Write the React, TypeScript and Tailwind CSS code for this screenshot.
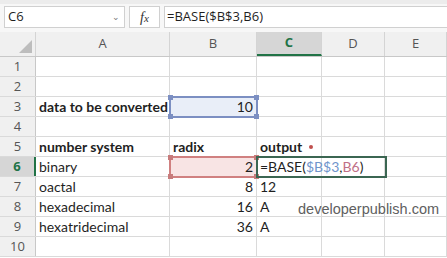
import React from 'react';

const cols = ['A', 'B', 'C', 'D', 'E'];
const widths = ['w-[134px]', 'w-[87px]', 'w-[65px]', 'w-[63px]', 'w-[62px]'];

type Cell = { text?: React.ReactNode; right?: boolean; bold?: boolean; bg?: string };

const rows: Cell[][] = [
  [],
  [],
  [{ text: 'data to be converted', bold: true }, { text: '10', right: true, bg: 'bg-[#e9eef8]' }],
  [],
  [{ text: 'number system', bold: true }, { text: 'radix', bold: true }, { text: 'output', bold: true }],
  [
    { text: 'binary' },
    { text: '2', right: true, bg: 'bg-[#f8e4e4]' },
    {
      text: (
        <span className="whitespace-nowrap">
          =BASE(<span className="text-[#6f95cc]">$B$3</span>,<span className="text-[#c06f86]">B6</span>)
        </span>
      ),
    },
  ],
  [{ text: 'oactal' }, { text: '8', right: true }, { text: '12' }],
  [{ text: 'hexadecimal' }, { text: '16', right: true }, { text: 'A' }],
  [{ text: 'hexatridecimal' }, { text: '36', right: true }, { text: 'A' }],
  [],
];

function Handle({ className }: { className: string }) {
  return <div className={`absolute h-[5px] w-[5px] ${className}`} />;
}

export default function App() {
  return (
    <div
      className="relative h-[258px] w-[447px] overflow-hidden bg-white text-[14px] text-[#1f1f1f]"
      style={{ fontFamily: 'Lato, "Open Sans", sans-serif' }}
    >
      {/* formula bar */}
      <div className="h-[4px] bg-[#ececec]" />
      <div className="flex h-[28px] items-center gap-[4px] bg-[#f7f7f7] pl-[4px] pb-[2px]">
        <div className="flex h-[22px] w-[121px] items-center justify-between border border-[#d0d0d0] bg-white pl-[3px] pr-[4px]">
          <span style={{ fontFamily: '"Open Sans", sans-serif' }} className="text-[13px]">C6</span>
          <span className="text-[9px] text-[#777]">⌄</span>
        </div>
        <div className="flex h-[22px] w-[31px] items-center justify-center border border-[#d0d0d0] bg-white">
          <span className="italic text-[14px] text-[#333]" style={{ fontFamily: '"Liberation Serif", serif' }}>
            f<span className="text-[11px]">x</span>
          </span>
        </div>
        <div
          className="flex h-[22px] flex-1 items-center border border-[#d0d0d0] border-r-0 bg-white pl-[2px] text-[13px]"
          style={{ fontFamily: '"Open Sans", sans-serif' }}
        >
          =BASE($B$3,B6)
        </div>
      </div>

      {/* column headers */}
      <div className="flex h-[25px] border-b border-[#c8c8c8] bg-[#f0f0f0] text-[13px] text-[#555]" style={{ fontFamily: '"Open Sans", sans-serif' }}>
        <div className="relative w-[36px] border-r border-[#d4d4d4]">
          <div className="absolute bottom-[3px] right-[3px] h-0 w-0 border-b-[13px] border-l-[13px] border-b-[#bdbdbd] border-l-transparent" />
        </div>
        {cols.map((c, i) => (
          <div
            key={c}
            className={`flex items-center justify-center border-r border-[#d4d4d4] ${widths[i]} ${
              c === 'C' ? 'border-b-2 border-b-[#217346] bg-[#d6d6d6] font-bold text-[#217346]' : ''
            }`}
          >
            {c}
          </div>
        ))}
      </div>

      {/* rows */}
      {rows.map((r, ri) => (
        <div key={ri} className="flex h-[20px] border-b border-[#dadada]">
          <div
            className={`flex w-[36px] items-center justify-center border-r text-[13px] ${
              ri === 5
                ? 'border-r-2 border-r-[#217346] bg-[#d6d6d6] font-bold text-[#217346]'
                : 'border-r-[#c8c8c8] bg-[#f0f0f0] text-[#555]'
            }`}
            style={{ fontFamily: '"Open Sans", sans-serif' }}
          >
            {ri + 1}
          </div>
          {cols.map((c, ci) => {
            const cell = r[ci] ?? {};
            return (
              <div
                key={c}
                className={`flex items-center overflow-visible whitespace-nowrap border-r border-[#dadada] px-[3px] ${widths[ci]} ${
                  cell.right ? 'justify-end' : ''
                } ${cell.bold ? 'font-bold' : ''} ${cell.bg ?? ''}`}
              >
                {cell.text}
              </div>
            );
          })}
        </div>
      ))}

      {/* B3 selection */}
      <div className="absolute left-[169px] top-[96px] h-[22px] w-[89px] border-2 border-[#7c8fc2]">
        <Handle className="-left-[3px] -top-[3px] bg-[#7c8fc2]" />
        <Handle className="-right-[3px] -top-[3px] bg-[#7c8fc2]" />
        <Handle className="-left-[3px] -bottom-[3px] bg-[#7c8fc2]" />
        <Handle className="-right-[3px] -bottom-[3px] bg-[#7c8fc2]" />
      </div>
      {/* B6 selection */}
      <div className="absolute left-[169px] top-[156px] h-[22px] w-[89px] border-2 border-[#d08080]">
        <Handle className="-left-[3px] -top-[3px] bg-[#c77b7b]" />
        <Handle className="-right-[3px] -top-[3px] bg-[#c77b7b]" />
        <Handle className="-left-[3px] -bottom-[3px] bg-[#c77b7b]" />
        <Handle className="-right-[3px] -bottom-[3px] bg-[#c77b7b]" />
      </div>
      {/* C6 active */}
      <div className="absolute left-[256px] top-[156px] h-[22px] w-[131px] border-2 border-[#3b6652]" />
      {/* comment dot */}
      <div className="absolute left-[309px] top-[145px] h-[4px] w-[4px] rounded-full bg-[#c0504d]" />

      {/* watermark */}
      <div
        className="absolute left-[298px] top-[199px] text-[14.5px] text-[#606060]"
        style={{ fontFamily: '"Liberation Sans", Arial, sans-serif' }}
      >
        developerpublish.com
      </div>
    </div>
  );
}
